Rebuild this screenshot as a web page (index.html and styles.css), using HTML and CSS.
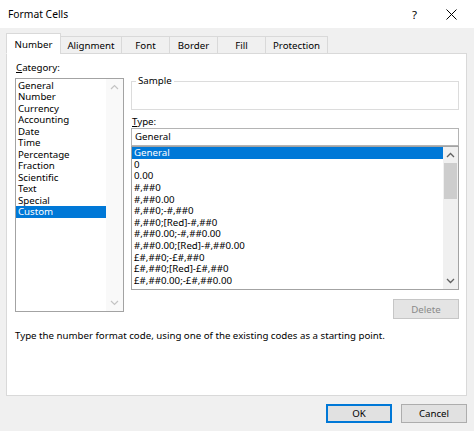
FILE: index.html
```html
<!DOCTYPE html>
<html>
<head>
<meta charset="utf-8">
<link rel="stylesheet" href="styles.css">
</head>
<body>
<div class="window">
  <div class="titlebar">
    <span class="title">Format Cells</span>
    <span class="tb-btn help">?</span>
    <span class="tb-btn close"><svg width="11" height="11" viewBox="0 0 11 11"><path d="M0.5 0.5 L10.5 10.5 M10.5 0.5 L0.5 10.5" stroke="#000" stroke-width="1" fill="none"/></svg></span>
  </div>
  <div class="client">
    <div class="tabs">
      <div class="tab active w-number">Number</div>
      <div class="tab w-align">Alignment</div>
      <div class="tab w-std">Font</div>
      <div class="tab w-std">Border</div>
      <div class="tab w-std">Fill</div>
      <div class="tab w-prot">Protection</div>
    </div>
    <div class="panel">
      <div class="columns">
        <div class="col-left">
          <div class="label"><u>C</u>ategory:</div>
          <div class="listbox cat">
            <div class="items">
              <div class="item">General</div>
              <div class="item">Number</div>
              <div class="item">Currency</div>
              <div class="item">Accounting</div>
              <div class="item">Date</div>
              <div class="item">Time</div>
              <div class="item">Percentage</div>
              <div class="item">Fraction</div>
              <div class="item">Scientific</div>
              <div class="item">Text</div>
              <div class="item">Special</div>
              <div class="item selected">Custom</div>
            </div>
            <div class="vscroll disabled">
              <div class="arrow"><svg width="9" height="6" viewBox="0 0 9 6"><polyline points="1,5 4.5,1.5 8,5" fill="none" stroke="#c4c4c4" stroke-width="1.2"/></svg></div>
              <div class="track"></div>
              <div class="arrow"><svg width="9" height="6" viewBox="0 0 9 6"><polyline points="1,1 4.5,4.5 8,1" fill="none" stroke="#c4c4c4" stroke-width="1.2"/></svg></div>
            </div>
          </div>
        </div>
        <div class="col-right">
          <fieldset class="sample">
            <legend>Sample</legend>
            <div class="sample-body"></div>
          </fieldset>
          <div class="label type-label"><u>T</u>ype:</div>
          <div class="input">General</div>
          <div class="listbox fmt">
            <div class="items">
              <div class="item selected">General</div>
              <div class="item">0</div>
              <div class="item">0.00</div>
              <div class="item">#,##0</div>
              <div class="item">#,##0.00</div>
              <div class="item">#,##0;-#,##0</div>
              <div class="item">#,##0;[Red]-#,##0</div>
              <div class="item">#,##0.00;-#,##0.00</div>
              <div class="item">#,##0.00;[Red]-#,##0.00</div>
              <div class="item">£#,##0;-£#,##0</div>
              <div class="item">£#,##0;[Red]-£#,##0</div>
              <div class="item">£#,##0.00;-£#,##0.00</div>
            </div>
            <div class="vscroll">
              <div class="arrow"><svg width="9" height="6" viewBox="0 0 9 6"><polyline points="1,5 4.5,1.5 8,5" fill="none" stroke="#606060" stroke-width="1.3"/></svg></div>
              <div class="track"><div class="thumb"></div></div>
              <div class="arrow"><svg width="9" height="6" viewBox="0 0 9 6"><polyline points="1,1 4.5,4.5 8,1" fill="none" stroke="#606060" stroke-width="1.3"/></svg></div>
            </div>
          </div>
          <div class="actions">
            <button class="btn disabled">Delete</button>
          </div>
        </div>
      </div>
      <p class="desc">Type the number format code, using one of the existing codes as a starting point.</p>
    </div>
    <div class="footer">
      <button class="btn default">OK</button>
      <button class="btn">Cancel</button>
    </div>
  </div>
</div>
</body>
</html>
```

FILE: styles.css
```css
html, body {
  margin: 0;
  padding: 0;
}
body {
  width: 474px;
  height: 431px;
  overflow: hidden;
  background: #f0f0f0;
  font-family: "Noto Sans", "Open Sans", sans-serif;
  font-size: 9.7px;
  color: #000;
}
.window {
  width: 474px;
  height: 431px;
}
.titlebar {
  height: 28px;
  background: #fff;
  display: flex;
  align-items: center;
}
.title {
  flex: 1;
  margin-left: 8px;
  font-size: 10.3px;
}
.tb-btn {
  height: 28px;
  display: flex;
  align-items: center;
  justify-content: center;
}
.help {
  width: 30px;
  font-size: 11.5px;
  padding-left: 3px;
  box-sizing: border-box;
}
.close {
  width: 46px;
}
.client {
  padding: 5px 7px 0 6px;
}
.tabs {
  display: flex;
  align-items: flex-end;
  height: 21px;
  position: relative;
  z-index: 1;
}
.tab {
  box-sizing: border-box;
  height: 18px;
  border: 1px solid #d9d9d9;
  background: #f0f0f0;
  display: flex;
  align-items: center;
  justify-content: center;
  margin-left: -1px;
}
.tab.active {
  height: 21px;
  background: #fff;
  border-bottom-color: #fff;
  margin-left: 0;
  padding-top: 1px;
}
.w-number { width: 55px; }
.w-align { width: 62px; }
.w-std { width: 49px; }
.w-prot { width: 63px; }
.panel {
  box-sizing: border-box;
  height: 343px;
  margin-top: -1px;
  border: 1px solid #d9d9d9;
  background: #fff;
  padding: 8px 7px 0 8px;
}
.columns {
  display: flex;
  gap: 7px;
  align-items: flex-start;
}
.col-left {
  width: 109px;
}
.col-right {
  width: 328px;
  padding-top: 13px;
}
.label {
  line-height: 12px;
  height: 12px;
  margin-bottom: 4px;
  padding-left: 1px;
}
.listbox {
  box-sizing: border-box;
  border: 1px solid #a3a3a3;
  display: flex;
  background: #fff;
}
.listbox .items {
  flex: 1;
}
.item {
  padding-left: 2px;
  white-space: nowrap;
}
.item.selected {
  background: #0078d7;
  color: #fff;
}
.cat {
  height: 234px;
}
.cat .items {
  padding-top: 0.5px;
}
.cat .item {
  line-height: 11.5px;
  height: 11.5px;
}
.vscroll {
  display: flex;
  flex-direction: column;
  background: #f0f0f0;
}
.vscroll.disabled {
  background: #f9f9f9;
}
.cat .vscroll {
  width: 17px;
}
.fmt .vscroll {
  width: 15px;
}
.arrow {
  height: 16px;
  display: flex;
  align-items: center;
  justify-content: center;
}
.track {
  flex: 1;
}
.thumb {
  margin: 0 1px;
  height: 36px;
  background: #cdcdcd;
}
.sample {
  margin: 0;
  padding: 0;
  border: 1px solid #dcdcdc;
  min-width: 0;
}
.sample legend {
  margin-left: 4px;
  padding: 0 2px;
  line-height: 12px;
}
.sample-body {
  height: 22px;
}
.type-label {
  margin-top: 6px;
  margin-bottom: 0;
}
.input {
  box-sizing: border-box;
  height: 18px;
  border: 1px solid #b4b4b4;
  line-height: 16px;
  padding-left: 3px;
}
.fmt {
  height: 144px;
}
.fmt .item {
  line-height: 11.65px;
  height: 11.65px;
}
.actions {
  display: flex;
  justify-content: flex-end;
  margin-top: 9px;
}
.btn {
  box-sizing: border-box;
  width: 66px;
  height: 19px;
  margin: 0;
  padding: 0;
  font-family: inherit;
  font-size: 9.7px;
  color: #000;
  background: #e1e1e1;
  border: 1px solid #adadad;
  border-radius: 0;
  line-height: 17px;
}
.btn.disabled {
  height: 20px;
  background: #e4e4e4;
  border-color: #c6c6c6;
  color: #8a8a8a;
}
.btn.default {
  border-color: #0078d7;
  box-shadow: inset 0 0 0 1px #0078d7;
}
.desc {
  margin: 11px 0 0 0;
  line-height: 12px;
  padding-left: 0;
  white-space: nowrap;
}
.footer {
  display: flex;
  justify-content: flex-end;
  gap: 9px;
  margin-top: 8px;
}
```
